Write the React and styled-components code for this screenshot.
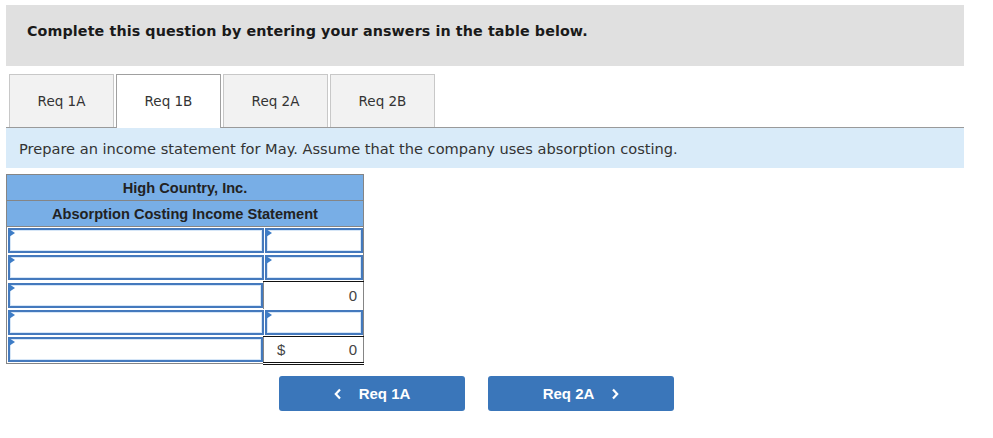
import React from "react";
import styled, { createGlobalStyle } from "styled-components";

const Global = createGlobalStyle`
  html, body { margin: 0; padding: 0; background: #fff; }
  body { font-family: "DejaVu Sans", Verdana, sans-serif; }
  * { box-sizing: border-box; }
`;

const Page = styled.div`
  width: 993px;
  padding: 5px 29px 0 6px;
`;

const Banner = styled.div`
  height: 61px;
  background: #e0e0e0;
  display: flex;
  align-items: center;
  padding: 0 0 10px 21px;
  font-size: 14.3px;
  font-weight: bold;
  color: #1a1a1a;
  letter-spacing: 0.1px;
`;

const Tabs = styled.div`
  display: flex;
  gap: 2px;
  margin-top: 8px;
  padding-left: 3px;
  border-bottom: 1px solid #9a9a9a;
  height: 54px;
`;

const Tab = styled.div`
  width: 105px;
  height: ${(p) => (p.$active ? "54px" : "53px")};
  margin-bottom: ${(p) => (p.$active ? "-1px" : "0")};
  padding-bottom: ${(p) => (p.$active ? "1px" : "0")};
  background: ${(p) => (p.$active ? "#fff" : "#f2f2f2")};
  border: 1px solid ${(p) => (p.$active ? "#a0a0a0" : "#c8c8c8")};
  border-bottom: none;
  display: flex;
  align-items: center;
  justify-content: center;
  font-size: 13.5px;
  color: #333;
`;

const Instruction = styled.div`
  height: 40px;
  background: #d9ebf9;
  display: flex;
  align-items: center;
  padding-left: 13px;
  font-size: 14.6px;
  color: #333;
`;

const Table = styled.table`
  margin-top: 6px;
  width: 358px;
  border-collapse: collapse;
  border: 1px solid #858585;
  font-family: "Liberation Sans", Arial, sans-serif;
`;

const HeadCell = styled.th`
  background: #78aee6;
  height: 26px;
  font-size: 14.6px;
  font-weight: bold;
  color: #222;
  text-align: center;
  border-bottom: 1px solid #858585;
  padding: 0;
`;

const Cell = styled.td`
  padding: 1px 0 1px 1px;
  height: 27px;
  width: ${(p) => p.$w || "auto"};
  vertical-align: middle;
`;

const TotalCell = styled.td`
  padding: 0 6px 0 0;
  height: 27px;
  border-top: 1px solid #111;
  border-left: 1px solid #858585;
  border-bottom: ${(p) => (p.$double ? "3px double #111" : "none")};
  font-size: 15px;
  color: #444;
  background: #fff;
`;

const TotalInner = styled.div`
  display: flex;
  justify-content: ${(p) => (p.$dollar ? "space-between" : "flex-end")};
  padding-left: 13px;
`;

const InputBox = styled.div`
  position: relative;
  height: 25px;
  border: 2px solid #4479bd;
  box-shadow: inset 0 0 0 1px #d6e6f7;
  background: #fff;
  &::before {
    content: "";
    position: absolute;
    left: -1px;
    top: -1px;
    border-left: 6px solid #3d7cc6;
    border-top: 4px solid transparent;
    border-bottom: 4px solid transparent;
  }
`;

const Nav = styled.div`
  display: flex;
  gap: 23px;
  margin: 11px 0 0 273px;
`;

const NavButton = styled.button`
  width: 186px;
  height: 35px;
  background: #3a76ba;
  border: none;
  border-radius: 3px;
  color: #fff;
  font-family: "Liberation Sans", Arial, sans-serif;
  font-weight: bold;
  font-size: 15px;
  display: flex;
  align-items: center;
  justify-content: center;
  gap: 17px;
  padding: 0;
`;

const Chevron = ({ dir }) => (
  <svg width="8" height="12" viewBox="0 0 8 12">
    <path
      d={dir === "left" ? "M6 1.5 L1.8 6 L6 10.5" : "M2 1.5 L6.2 6 L2 10.5"}
      fill="none"
      stroke="#fff"
      strokeWidth="2.2"
    />
  </svg>
);

const rows = [
  { right: "input" },
  { right: "input" },
  { right: "total", value: "0" },
  { right: "input" },
  { right: "grand", value: "0" },
];

export default function App() {
  return (
    <>
      <Global />
      <Page>
        <Banner>Complete this question by entering your answers in the table below.</Banner>
        <Tabs>
          <Tab>Req 1A</Tab>
          <Tab $active>Req 1B</Tab>
          <Tab>Req 2A</Tab>
          <Tab>Req 2B</Tab>
        </Tabs>
        <Instruction>
          Prepare an income statement for May. Assume that the company uses absorption costing.
        </Instruction>
        <Table>
          <thead>
            <tr>
              <HeadCell colSpan={2}>High Country, Inc.</HeadCell>
            </tr>
            <tr>
              <HeadCell colSpan={2}>Absorption Costing Income Statement</HeadCell>
            </tr>
          </thead>
          <tbody>
            {rows.map((r, i) => (
              <tr key={i}>
                <Cell $w="257px">
                  <InputBox />
                </Cell>
                {r.right === "input" ? (
                  <Cell>
                    <InputBox />
                  </Cell>
                ) : (
                  <TotalCell $double={r.right === "grand"}>
                    <TotalInner $dollar={r.right === "grand"}>
                      {r.right === "grand" && <span>$</span>}
                      <span>{r.value}</span>
                    </TotalInner>
                  </TotalCell>
                )}
              </tr>
            ))}
          </tbody>
        </Table>
        <Nav>
          <NavButton>
            <Chevron dir="left" />
            Req 1A
          </NavButton>
          <NavButton>
            Req 2A
            <Chevron dir="right" />
          </NavButton>
        </Nav>
      </Page>
    </>
  );
}
